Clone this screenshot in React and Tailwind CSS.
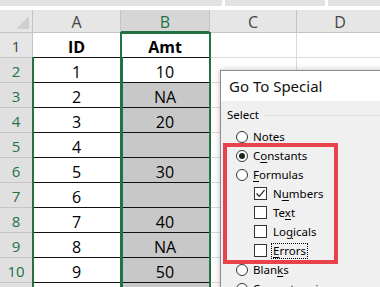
import React from "react";

function Radio({ checked }) {
  return (
    <span className="w-[12px] h-[12px] rounded-full border border-[#333] bg-white flex items-center justify-center shrink-0">
      {checked && <span className="w-[6px] h-[6px] rounded-full bg-[#222]" />}
    </span>
  );
}

function Check({ checked }) {
  return (
    <span className="w-[13px] h-[13px] border border-[#333] bg-white flex items-center justify-center shrink-0">
      {checked && (
        <svg width="11" height="11" viewBox="0 0 11 11">
          <path d="M1.5 5.5 L4.3 8.3 L9.5 2.2" fill="none" stroke="#222" strokeWidth="1.2" />
        </svg>
      )}
    </span>
  );
}

function Opt({ pre, u, post, checked }) {
  return (
    <div className="h-[19px] flex items-center pl-[15px] gap-[5px]">
      <Radio checked={checked} />
      <span>
        {pre}
        <u className="underline-offset-[2px]">{u}</u>
        {post}
      </span>
    </div>
  );
}

function Chk({ pre, u, post, checked, focus }) {
  return (
    <div className="h-[19px] flex items-center pl-[33px] gap-[4px]">
      <Check checked={checked} />
      <span className={focus ? "border border-dotted border-black px-[1px] leading-[14px]" : "px-[2px]"}>
        {pre}
        <u className="underline-offset-[2px]">{u}</u>
        {post}
      </span>
    </div>
  );
}

export default function App() {
  const rowsData = [
    ["ID", "Amt"],
    ["1", "10"],
    ["2", "NA"],
    ["3", "20"],
    ["4", ""],
    ["5", "30"],
    ["6", ""],
    ["7", "40"],
    ["8", "NA"],
    ["9", "50"],
  ];

  const cells = [];
  cells.push(
    <div key="corner" className="relative bg-[#e6e6e6] border-r border-b border-[#c4c4c4]">
      <svg className="absolute right-[3px] bottom-[3px]" width="13" height="13" viewBox="0 0 13 13">
        <path d="M13 0 L13 13 L0 13 Z" fill="#cfcfcf" />
      </svg>
    </div>
  );
  cells.push(
    <div key="hA" className="bg-[#e6e6e6] border-r border-b border-[#c4c4c4] flex items-center justify-center pt-[2px] text-[#444] text-[16px]">A</div>
  );
  cells.push(
    <div key="hB" className="bg-[#d6d6d6] border-r border-[#c4c4c4] border-b-2 border-b-[#217346] flex items-center justify-center pt-[2px] text-[#217346] text-[16px]">B</div>
  );
  cells.push(
    <div key="hC" className="bg-[#e6e6e6] border-r border-b border-[#c4c4c4] flex items-center justify-center pt-[2px] text-[#444] text-[16px]">C</div>
  );
  cells.push(
    <div key="hD" className="bg-[#e6e6e6] border-r border-b border-[#c4c4c4] flex items-center justify-center pt-[2px] text-[#444] text-[16px]">D</div>
  );

  for (let i = 0; i < 11; i++) {
    const r = i + 1;
    const sel = r >= 2;
    const data = rowsData[i];
    cells.push(
      <div
        key={"rh" + r}
        className={
          "border-r border-b border-[#c4c4c4] flex items-center justify-center pt-[3px] text-[15px] " +
          (sel ? "bg-[#e0e0e0] text-[#217346]" : "bg-[#e6e6e6] text-[#444]")
        }
      >
        {r}
      </div>
    );
    if (data) {
      const bold = r === 1 ? "font-bold" : "";
      const grayB = r >= 3;
      cells.push(
        <div key={"a" + r} className={"bg-white border-r border-b border-[#111] flex items-center justify-center pt-[3px] text-black " + bold}>
          {data[0]}
        </div>
      );
      cells.push(
        <div
          key={"b" + r}
          className={
            "border-r border-b border-[#111] flex items-center justify-center pt-[3px] text-black " +
            bold +
            (grayB ? " bg-[#c8c8c8]" : " bg-white")
          }
        >
          {data[1]}
        </div>
      );
    } else {
      cells.push(<div key={"a" + r} className="bg-white border-r border-b border-[#dadada]" />);
      cells.push(<div key={"b" + r} className="bg-[#c8c8c8] border-r border-b border-[#dadada]" />);
    }
    cells.push(<div key={"c" + r} className="bg-white border-r border-b border-[#dadada]" />);
    cells.push(<div key={"d" + r} className="bg-white border-r border-b border-[#dadada]" />);
  }

  return (
    <div className="relative w-[380px] h-[287px] overflow-hidden bg-white font-['Open_Sans',sans-serif] text-[16px]">
      <div className="h-[10px] flex flex-col">
        <div className="h-[6px] flex gap-[3px] bg-white">
          <div className="w-[222px] bg-[#e2e2e2]" />
          <div className="w-[100px] bg-[#e2e2e2]" />
          <div className="flex-1 bg-[#e2e2e2]" />
        </div>
      </div>
      <div className="grid grid-cols-[33px_88px_89px_87px_87px] grid-rows-[23px_repeat(11,25px)] leading-none">
        {cells}
      </div>

      <div className="absolute left-[32px] top-[57px] w-[91px] h-[240px] border-x-2 border-[#217346] pointer-events-none" />
      <div className="absolute left-[120px] top-[32px] w-[91px] h-[265px] border-x-2 border-t-2 border-[#217346] pointer-events-none" />

      <div className="absolute left-[220px] top-[70px] w-[175px] h-[230px] border border-[#8e8e8e] bg-[#f0f0f0] font-['Noto_Sans',sans-serif] text-[11.5px] text-black shadow-[0_0_6px_rgba(0,0,0,0.25)]">
        <div className="h-[30px] bg-white flex items-center pl-[8px] text-[15px] text-[#111]">Go To Special</div>
        <div className="pt-[6px]">
          <div className="h-[16px] flex items-center pl-[6px] gap-[5px]">
            <span>Select</span>
            <div className="flex-1 h-px bg-[#dcdcdc]" />
          </div>
          <div className="mt-[4px] flex flex-col">
            <Opt u="N" post="otes" />
            <Opt pre="C" u="o" post="nstants" checked />
            <Opt u="F" post="ormulas" />
            <Chk pre="N" u="u" post="mbers" checked />
            <Chk pre="Te" u="x" post="t" />
            <Chk pre="Lo" u="g" post="icals" />
            <Chk u="E" post="rrors" focus />
            <Opt pre="Blan" u="k" post="s" />
            <Opt pre="Current " u="r" post="egion" />
          </div>
        </div>
      </div>

      <div className="absolute left-[223px] top-[143px] w-[115px] h-[121px] border-4 border-[#e8434b] pointer-events-none" />
    </div>
  );
}
